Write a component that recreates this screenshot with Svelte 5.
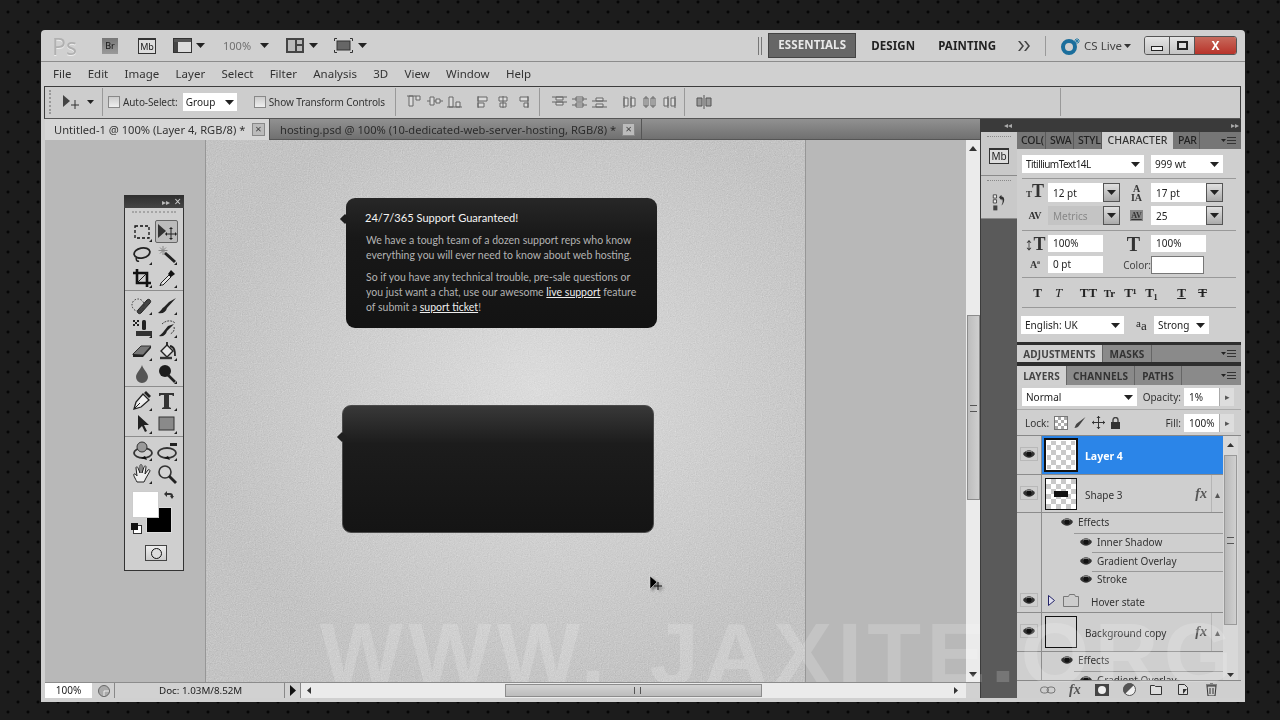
<script>
  const menus = ['File','Edit','Image','Layer','Select','Filter','Analysis','3D','View','Window','Help'];
  const tools = [
    ['<rect x="4" y="5" width="14" height="12" fill="none" stroke="#111" stroke-width="1.3" stroke-dasharray="3 2"/>', true],
    ['', false],
    ['<ellipse cx="11" cy="9" rx="8" ry="5" fill="none" stroke="#222" stroke-width="1.8" transform="rotate(-12 11 9)"/><path d="M6 13c-2 2 0 5 2 4" fill="none" stroke="#222" stroke-width="1.5"/>', true],
    ['<path d="M7 2v9M2.500 6.500h9M4 3.500l6 6M10 3.500l-6 6" stroke="#8a8a8a"/><path d="M9 9l10 9" stroke="#222" stroke-width="3"/>', true],
    ['<path d="M6 2v14h14M2 6h14v14" fill="none" stroke="#111" stroke-width="2.6"/><path d="M6 16L16 6" stroke="#222"/>', true],
    ['<path d="M5 18l-1 1 1-3 8-8 2 2-8 8z" fill="#e4e4e4" stroke="#222"/><path d="M12 7l3-4 4 4-4 3z" fill="#111"/>', true],
    ['<path d="M7 16l9-10c2-2 5 1 3 3L10 19c-2 2-5-1-3-3z" fill="#444" stroke="#222"/><circle cx="7" cy="11" r="6" fill="none" stroke="#333" stroke-dasharray="1.5 1.5"/>', true],
    ['<path d="M2 19c5 1 8-1 9-5l9-10-7 4-5 5c-2 1-3 4-6 6z" fill="#222"/>', true],
    ['<path d="M2 3h2v2H2zM6 3h2v2H6zM4 5h2v2H4zM2 7h2v2H2zM6 7h2v2H6z" fill="#222"/><rect x="11" y="3" width="4" height="10" rx="1.5" fill="#222"/><rect x="5" y="14" width="16" height="5" fill="#333"/>', true],
    ['<path d="M3 19c4 1 7-1 8-5l7-7-6 2-4 5c-1 2-3 3-5 5z" fill="#222"/><path d="M6 7c4-4 10-4 13-1M18 10c1 3-1 6-4 7" fill="none" stroke="#444" stroke-dasharray="2 1"/>', true],
    ['<path d="M2 14l8-8h10l-8 9H2z" fill="#777" stroke="#333"/><path d="M2 14v3h10l8-9V6l-8 9z" fill="#222"/>', true],
    ['<path d="M5 11l6-6 6 6-6 6z" fill="#e4e4e4" stroke="#222" stroke-width="1.4"/><path d="M11 5V2M14 6c5 1 5 6 5 10" fill="none" stroke="#222" stroke-width="1.8"/><path d="M4 18h12" stroke="#333" stroke-width="2.400"/>', true],
    ['<path d="M11 2c-1 4-6 8-6 12a6 6 0 0 0 12 0c0-4-5-8-6-12z" fill="#555"/>', false],
    ['<circle cx="9" cy="8" r="6" fill="#1c1c1c"/><path d="M12 12l7 7" stroke="#222" stroke-width="2.600"/>', true],
    ['<path d="M3 19l2-7 7-8 6 6-8 7z" fill="#eee" stroke="#222" stroke-width="1.3"/><path d="M3 19l6-6" stroke="#222"/><path d="M13 3l2-2 5 5-2 2z" fill="#222"/>', true],
    ['<path d="M3 6V3h15v3h-1l-1-1h-3v12l2 1v1H6v-1l2-1V5H5L4 6z" fill="#333"/>', true],
    ['<path d="M7 2v15l4-4 3 6 2-1-3-6h5z" fill="#222"/>', true],
    ['<rect x="3" y="4" width="15" height="13" fill="#8a8a8a" stroke="#333"/>', true],
    ['<ellipse cx="12" cy="13" rx="9" ry="5" fill="none" stroke="#333" stroke-width="1.8"/><circle cx="11" cy="7" r="5" fill="#999" stroke="#333"/><path d="M10 18l6 2-2-4z" fill="#111"/>', true],
    ['<ellipse cx="11" cy="13" rx="9" ry="5" fill="none" stroke="#333" stroke-width="1.8"/><rect x="14" y="3" width="7" height="3" fill="#222"/><path d="M8 18l6 2-2-4z" fill="#111"/>', true],
    ['<path d="M6 19C4 15 2 12 3 11s3 2 3 2L5 5c0-2 2-1 2 0l2 5V3c0-2 2-2 2 0v7l2-6c1-2 2-1 2 0l-1 7 3-4c1-1 2 0 2 1l-4 7-2 4z" fill="#eee" stroke="#222"/>', true],
    ['<circle cx="9" cy="9" r="6" fill="#d4d4d4" stroke="#333" stroke-width="1.600"/><path d="M13 13l7 7" stroke="#222" stroke-width="2.800"/>', false],
  ];
  const groups = [tools.slice(0,6), tools.slice(6,14), tools.slice(14,18), tools.slice(18,22)];
  const tabs2 = ['COL(','SWA','STYL'];
  const styleBtns = [['T','b'],['T','i'],['TT','b gl'],['Tr','small'],['T¹','b'],['T₁','b'],['T','u gl'],['T','s']];
</script>

{#snippet caret()}<svg class="caret" width="9" height="5" viewBox="0 0 9 5"><path d="M0 0h9L4.500 5z" fill="#222"/></svg>{/snippet}
{#snippet eye()}<svg width="14" height="10" viewBox="0 0 14 10"><path d="M1 5c3-5 9-5 12 0-3 5-9 5-12 0z" fill="#333"/><circle cx="7" cy="5" r="2.500" fill="#111"/><path d="M4 3c2-1 4-1 6 0" stroke="#999" fill="none"/></svg>{/snippet}
{#snippet menuIcon()}<svg class="mi" width="15" height="8" viewBox="0 0 15 8"><path d="M0 2h5L2.500 5z" fill="#222"/><path d="M6 .5h9M6 3.500h9M6 6.500h9" stroke="#333"/></svg>{/snippet}
{#snippet align(n)}<svg width="18" height="14" viewBox="0 0 18 14"><path d={n} fill="#dcdcdc" stroke="#666"/></svg>{/snippet}

<div class="desk">
  <div class="win">
    <header class="title">
      <span class="ps">Ps</span>
      <span class="br">Br</span>
      <span class="mb">Mb</span>
      <svg class="t-arr" width="20" height="15" viewBox="0 0 20 15"><rect x=".5" y=".5" width="18" height="14" fill="#ddd" stroke="#333"/><path d="M1 1h17v3H1z" fill="#555"/><rect x="1" y="4" width="4" height="10" fill="#444"/></svg>
      <span class="cwrap c-a">{@render caret()}</span>
      <span class="zoomv">100%</span>
      <span class="cwrap c-b">{@render caret()}</span>
      <svg class="t-view" width="18" height="15" viewBox="0 0 18 15"><rect width="18" height="15" fill="#444"/><path d="M2 2h7v11H2zM11 2h5v4h-5zM11 8h5v5h-5z" fill="#bbb"/></svg>
      <span class="cwrap c-c">{@render caret()}</span>
      <svg class="t-screen" width="19" height="15" viewBox="0 0 19 15"><path d="M.5 3V.5H3M16 .5h2.500V3M.5 12v2.500H3M16 14.500h2.500V12" fill="none" stroke="#333"/><rect x="3" y="3" width="13" height="9" fill="#666" stroke="#333"/></svg>
      <span class="cwrap c-c">{@render caret()}</span>
      <span class="grow"></span>
      <span class="dbl"></span>
      <span class="ws on">ESSENTIALS</span>
      <span class="ws d">DESIGN</span>
      <span class="ws p">PAINTING</span>
      <svg class="more" width="14" height="10" viewBox="0 0 14 10"><path d="M1 0l4 5-4 5h2l4-5-4-5zM7 0l4 5-4 5h2l4-5-4-5z" fill="#444"/></svg>
      <span class="vsep"></span>
      <svg class="cs" width="21" height="18" viewBox="0 0 21 18"><circle cx="9" cy="10" r="6" fill="none" stroke="#1b6e9c" stroke-width="4"/><path d="M17 1v6M14 4h6M15 2l4 4M19 2l-4 4" stroke="#2a7ea8"/></svg>
      <span class="cslive">CS Live</span>
      <svg class="cscaret" width="7" height="4" viewBox="0 0 7 4"><path d="M0 0h7L3.500 4z" fill="#333"/></svg>
      <div class="wbtns">
        <span class="wb"><i class="minb"></i></span>
        <span class="wb"><i class="maxb"></i></span>
        <span class="wb close">X</span>
      </div>
    </header>

    <nav class="menu">
      {#each menus as m}<span>{m}</span>{/each}
    </nav>

    <div class="opts">
      <span class="grip"></span>
      <svg class="movei" width="20" height="14" viewBox="0 0 20 14"><path d="M1 0v12l7-6z" fill="#444"/><path d="M13 5v9M9 10h8" stroke="#333"/></svg>
      <svg class="ocaret" width="7" height="4" viewBox="0 0 7 4"><path d="M0 0h7L3.500 4z" fill="#222"/></svg>
      <span class="osep o1"></span>
      <span class="chk"></span><span class="olabel">Auto-Select:</span>
      <span class="groupsel"><span>Group</span>{@render caret()}</span>
      <span class="chk c2"></span><span class="olabel">Show Transform Controls</span>
      <span class="osep o2"></span>
      <div class="aligns">
        {@render align('M1 1h9M3 1v10h4V1zM10 1h4v4h-4z')}
        {@render align('M1 6h3M4 2h4v8H4zM8 6h2M10 4h4v4h-4zM14 6h3')}
        {@render align('M1 12h15M3 2v10h4V2zM10 7v5h4V7z')}
        <span class="ag"></span>
        {@render align('M2 1v12M2 2h9v4H2zM2 8h6v4H2z')}
        {@render align('M7 1v12M3 2h8v4H3zM4 8h6v4H4z')}
        {@render align('M12 1v12M4 2h8v4H4zM8 8h4v4H8z')}
      </div>
      <span class="osep o3"></span>
      <div class="aligns a2">
        {@render align('M1 2h15M1 7h15M5 2v3h7V2zM5 7h7v3H5z')}
        {@render align('M1 4h15M1 10h15M5 2v4h7V2zM5 8h7v4H5z')}
        {@render align('M1 6h15M1 12h15M5 3h7v3H5zM5 9h7v3H5z')}
        <span class="ag"></span>
        {@render align('M3 1v12M10 1v12M3 3h4v8H3zM10 3h4v8h-4z')}
        {@render align('M5 1v12M12 1v12M3 3h4v8H3zM10 3h4v8h-4z')}
        {@render align('M7 1v12M14 1v12M3 3h4v8H3zM10 3h4v8h-4z')}
      </div>
      <span class="osep o4"></span>
      <svg class="autoal" width="18" height="14" viewBox="0 0 18 14"><path d="M9 0v14M2 3h5v8H2zM11 3h5v8h-5z" fill="#999" stroke="#555"/></svg>
      <span class="grow"></span>
      <span class="osep o5"></span>
    </div>

    <div class="work">
      <section class="docs">
        <div class="tabs">
          <div class="tab active"><span>Untitled-1 @ 100% (Layer 4, RGB/8) *</span><b class="x">×</b></div>
          <div class="tab second"><span>hosting.psd @ 100% (10-dedicated-web-server-hosting, RGB/8) *</span><b class="x">×</b></div>
        </div>
        <div class="canvas">
          <div class="paper">
            <svg class="noise" width="601" height="542"><filter id="grain" color-interpolation-filters="sRGB"><feTurbulence type="fractalNoise" baseFrequency="0.85" numOctaves="2"/><feColorMatrix type="matrix" values=".33 .33 .33 0 0 .33 .33 .33 0 0 .33 .33 .33 0 0 0 0 0 0 1"/></filter><rect width="601" height="542" filter="url(#grain)"/></svg>
            <div class="bubble b1">
              <i class="notch"></i>
              <h3>24/7/365 Support Guaranteed!</h3>
              <p>We have a tough team of a dozen support reps who know everything you will ever need to know about web hosting.</p>
              <p>So if you have any technical trouble, pre-sale questions or you just want a chat, use our awesome <u>live support</u> feature of submit a <u>suport ticket</u>!</p>
            </div>
            <div class="bubble b2"><i class="notch"></i></div>
          </div>
          <div class="vscroll">
            <svg class="sa" width="8" height="5" viewBox="0 0 8 5"><path d="M4 0l4 5H0z" fill="#333"/></svg>
            <div class="vthumb"><span class="gripv"></span></div>
            <svg class="sb" width="8" height="5" viewBox="0 0 8 5"><path d="M0 0h8L4 5z" fill="#333"/></svg>
          </div>
        </div>
        <div class="status">
          <span class="zbox">100%</span>
          <svg class="sicon" width="12" height="12" viewBox="0 0 12 12"><circle cx="6" cy="6" r="5.500" fill="#aaa" stroke="#666"/><path d="M6 6h5M6 6v5" stroke="#eee"/></svg>
          <span class="doc">Doc: 1.03M/8.52M</span>
          <svg class="play" width="6" height="11" viewBox="0 0 6 11"><path d="M0 0l6 5.500L0 11z" fill="#111"/></svg>
          <div class="hscroll">
            <svg class="hl" width="4" height="7" viewBox="0 0 4 7"><path d="M4 0v7L0 3.500z" fill="#333"/></svg>
            <div class="hthumb"><span class="griph"></span></div>
            <svg class="hr" width="4" height="7" viewBox="0 0 4 7"><path d="M0 0v7l4-3.500z" fill="#333"/></svg>
          </div>
          <span class="corner"></span>
        </div>
      </section>

      <aside class="dock">
        <div class="dockhead"><span class="hl2">◂◂</span><span class="hr2">▸▸</span></div>
        <div class="dockbody">
          <div class="iconcol">
            <div class="ic c1"><span class="dots"></span><span class="mbbig">Mb</span></div>
            <div class="ic c2b"><span class="dots"></span>
              <svg width="16" height="18" viewBox="0 0 16 22"><path d="M1 1h4v4H1zM1 7h4v4H1z" fill="#eee" stroke="#333"/><rect x="1" y="14" width="5" height="6" fill="#444"/><path d="M8 4l3-3v2c5 0 4 8 0 11 2-4 2-8 0-8v2z" fill="#333"/></svg>
            </div>
          </div>
          <div class="panels">
            <div class="ptabs">
              {#each tabs2 as t}<span class="pt cut">{t}</span>{/each}
              <span class="pt act">CHARACTER</span><span class="pt par">PAR</span>
              <span class="grow"></span>{@render menuIcon()}
            </div>
            <div class="char">
              <div class="row r1">
                <span class="sel w122"><span class="ttl">TitilliumText14L</span>{@render caret()}</span>
                <span class="sel w72"><span>999 wt</span>{@render caret()}</span>
              </div>
              <hr class="h1"/>
              <div class="row r2">
                <span class="glyph tt"><small>T</small>T</span>
                <span class="combo"><span>12 pt</span><b>{@render caret()}</b></span>
                <span class="glyph lead">A<br/>IA</span>
                <span class="combo"><span>17 pt</span><b>{@render caret()}</b></span>
              </div>
              <div class="row r3">
                <span class="glyph av">AV</span>
                <span class="combo dis"><span>Metrics</span><b>{@render caret()}</b></span>
                <span class="glyph av dark">AV</span>
                <span class="combo"><span>25</span><b>{@render caret()}</b></span>
              </div>
              <hr class="h2"/>
              <div class="row r4">
                <span class="glyph big">↕T</span>
                <span class="inp">100%</span>
                <span class="glyph big wide">T</span>
                <span class="inp">100%</span>
              </div>
              <div class="row r5">
                <span class="glyph base">Aª</span>
                <span class="inp">0 pt</span>
                <span class="collab">Color:</span>
                <span class="swatch"></span>
              </div>
              <hr class="h3"/>
              <div class="row r6">
                {#each styleBtns as [t,c]}<span class={'sb2 '+c}>{t}</span>{/each}
              </div>
              <hr class="h4"/>
              <div class="row r7">
                <span class="sel w103"><span>English: UK</span>{@render caret()}</span>
                <span class="aa"><sup>a</sup>a</span>
                <span class="sel w55"><span>Strong</span>{@render caret()}</span>
              </div>
            </div>
            <div class="adj">
              <span class="pt2 act2 t86">ADJUSTMENTS</span><span class="pt2 t49">MASKS</span><span class="grow"></span>{@render menuIcon()}
            </div>
            <div class="ltabs">
              <span class="pt2 act2 t50">LAYERS</span><span class="pt2 t68">CHANNELS</span><span class="pt2 t47">PATHS</span><span class="grow"></span>{@render menuIcon()}
            </div>
            <div class="blend">
              <span class="sel w115"><span>Normal</span>{@render caret()}</span>
              <span class="grow"></span>
              <span class="lbl">Opacity:</span>
              <span class="inp sm">1%</span><span class="step">▸</span>
            </div>
            <div class="lock">
              <span class="lbl">Lock:</span>
              <span class="ck"></span>
              <svg width="14" height="13" viewBox="0 0 13 13"><path d="M1 12c2 0 4-1 5-3l6-8-8 6c-2 1-2 3-3 5z" fill="#444"/></svg>
              <svg width="13" height="13" viewBox="0 0 13 13"><path d="M6.500 0v13M0 6.500h13" stroke="#333"/><path d="M6.500 0l2 2h-4zM6.500 13l2-2h-4zM0 6.500l2 2v-4zM13 6.500l-2 2v-4z" fill="#333"/></svg>
              <svg width="11" height="12" viewBox="0 0 11 12"><path d="M3 5V3a2.500 2.500 0 0 1 5 0v2" fill="none" stroke="#444" stroke-width="1.400"/><rect x="1" y="5" width="9" height="7" fill="#333"/></svg>
              <span class="grow"></span>
              <span class="lbl">Fill:</span>
              <span class="inp sm">100%</span><span class="step">▸</span>
            </div>
            <div class="layers">
              <div class="llist">
                <div class="lrow h39"><span class="eye">{@render eye()}</span><div class="lmain sel2"><span class="thumb chk2 selthumb"></span><b>Layer 4</b></div></div>
                <div class="lrow h38"><span class="eye">{@render eye()}</span><div class="lmain"><span class="thumb chk2"><i class="blk"></i></span><span class="nm">Shape 3</span><em>fx</em><span class="up">▴</span></div></div>
                <div class="lrow sub e21"><span class="eye empty"></span><div class="lmain eff">{@render eye()}<span>Effects</span></div></div>
                <div class="lrow sub"><span class="eye empty"></span><div class="lmain eff2">{@render eye()}<span>Inner Shadow</span></div></div>
                <div class="lrow sub"><span class="eye empty"></span><div class="lmain eff2">{@render eye()}<span>Gradient Overlay</span></div></div>
                <div class="lrow sub e17"><span class="eye empty"></span><div class="lmain eff2 last">{@render eye()}<span>Stroke</span></div></div>
                <div class="lrow h25"><span class="eye e-h">{@render eye()}</span><div class="lmain grp"><svg width="7" height="11" viewBox="0 0 7 11"><path d="M.5.500l6 5-6 5z" fill="#e0e0ee" stroke="#226"/></svg><svg width="16" height="13" viewBox="0 0 16 13"><path d="M.5 2.500h5l1-2h5l1 2h3v10H.5z" fill="#ccc" stroke="#777"/></svg><span>Hover state</span></div></div>
                <div class="lrow h39"><span class="eye">{@render eye()}</span><div class="lmain"><span class="thumb plain"></span><span class="nm">Background copy</span><em>fx</em><span class="up">▴</span></div></div>
                <div class="lrow sub e20"><span class="eye empty"></span><div class="lmain eff">{@render eye()}<span>Effects</span></div></div>
                <div class="lrow sub"><span class="eye empty"></span><div class="lmain eff2">{@render eye()}<span>Gradient Overlay</span></div></div>
              </div>
              <div class="lscroll">
                <svg class="la" width="7" height="4" viewBox="0 0 7 4"><path d="M3.500 0L7 4H0z" fill="#333"/></svg>
                <div class="lthumb"><span class="gripv"></span></div>
                <svg class="lb" width="7" height="4" viewBox="0 0 7 4"><path d="M0 0h7L3.500 4z" fill="#333"/></svg>
              </div>
            </div>
            <div class="lfoot">
              <svg class="f1" width="16" height="8" viewBox="0 0 16 8"><rect x=".5" y="1" width="8" height="6" rx="3" fill="none" stroke="#777"/><rect x="7" y="1" width="8" height="6" rx="3" fill="none" stroke="#777"/></svg>
              <em class="f2">fx</em>
              <svg class="f3" width="14" height="12" viewBox="0 0 14 12"><rect width="14" height="12" fill="#444"/><circle cx="7" cy="6" r="4" fill="#eee"/></svg>
              <svg class="f4" width="13" height="13" viewBox="0 0 13 13"><circle cx="6.500" cy="6.500" r="6" fill="#eee" stroke="#555"/><path d="M11 2L2 11A6 6 0 0 1 11 2z" fill="#555"/></svg>
              <svg class="f5" width="12" height="10" viewBox="0 0 12 10"><path d="M.5 9.500v-9h4l1 1h6v8z" fill="#ddd" stroke="#333"/></svg>
              <svg class="f6" width="10" height="11" viewBox="0 0 10 11"><path d="M.5.500h6l3 3v7H.5z" fill="#ddd" stroke="#333"/><path d="M5 10V5h4" fill="#333"/></svg>
              <svg class="f7" width="11" height="13" viewBox="0 0 11 13"><path d="M1 3h9l-1 10H2zM0 2h11M4 0h3" fill="#ccc" stroke="#333"/><path d="M4 5v6M7 5v6" stroke="#333"/></svg>
            </div>
          </div>
        </div>
      </aside>
    </div>
  </div>

  <div class="toolbox">
    <div class="tbhead"><span>▸▸</span><b>×</b></div>
    <div class="tbgrip"></div>
    {#each groups as g, gi}
      <div class="tgrid" class:lined={gi > 0}>
        {#each g as [path, tri], i}
          <span class="tool" class:sel3={gi === 0 && i === 1}>
            {#if gi === 0 && i === 1}
              <svg width="22" height="22" viewBox="0 0 22 22"><path d="M2 3v14l8-7z" fill="#333"/><path d="M15 7v11M10 13h10" stroke="#222"/><path d="M15 6l2 2h-4zM15 19l2-2h-4zM9 13l2 2v-4zM21 13l-2 2v-4z" fill="#222"/></svg>
            {:else}
              <svg width="22" height="22" viewBox="0 0 22 22">{@html path}</svg>
            {/if}
            {#if tri}<i class="tri"></i>{/if}
          </span>
        {/each}
      </div>
    {/each}
    <div class="colors">
      <span class="bgc"></span><span class="fgc"></span>
      <span class="defc"></span>
      <svg class="swap" width="11" height="11" viewBox="0 0 11 11"><path d="M1 3l3-3v2h3c2 0 3 1 3 3h1l-2 3-2-3h1c0-1-1-1-2-1H4v2z" fill="#333"/></svg>
    </div>
    <div class="qm"><i></i></div>
  </div>

  <div class="wm"><span>WWW. JAXITE.ORG</span></div>

  <svg class="cursor" width="16" height="18" viewBox="0 0 16 18"><path d="M1 1v13l7-7z" fill="#000" stroke="#eee" stroke-width=".5"/><path d="M9 7v8M5 11h8" stroke="#111"/></svg>
</div>

<style>
  :global(body){margin:0;background:#1b1b1b;}
  .desk{position:relative;width:1280px;height:720px;box-sizing:border-box;padding:30px 35px 18px 41px;overflow:hidden;
    background-color:#1c1c1c;
    background-image:radial-gradient(circle at 50% 50%,#060606 1.2px,transparent 1.8px),radial-gradient(circle at 50% 50%,#060606 1.2px,transparent 1.8px);
    background-size:20px 20px;background-position:8px 12px,18px 2px;
    font-family:"Noto Sans","Open Sans",sans-serif;color:#222;font-size:10px;}
  .win{width:100%;height:100%;background:#d0d0d0;border-radius:4px 4px 0 0;display:flex;flex-direction:column;box-sizing:border-box;padding:0 4px 4px 3px;overflow:hidden;}
  .grow{flex:1;}
  svg{display:block;flex:none;}

  .title{height:32px;display:flex;align-items:center;border-bottom:1px solid #8c8c8c;flex:none;margin:0 -4px 0 -3px;padding:0 8px 0 11px;box-sizing:border-box;position:relative;}
  .ps{font:23px "Noto Sans",sans-serif;color:#b0b0b0;width:24px;text-shadow:0 1px 0 #eee;line-height:30px;}
  .br{width:16px;height:16px;margin-left:26px;background:linear-gradient(#777,#9a9a9a);font-size:9px;line-height:16px;text-align:center;color:#111;}
  .mb{margin-left:20px;width:16px;height:13px;border:1px solid #333;background:#ddd;font-size:9px;line-height:13px;text-align:center;border-top-width:2px;}
  .t-arr{margin-left:17px;}
  .cwrap{display:block;}
  .caret{display:block;}
  .c-a{margin-left:3px;}
  .zoomv{margin-left:18px;color:#707070;font-size:11px;width:28px;}
  .c-b{margin-left:9px;}
  .t-view{margin-left:17px;}
  .c-c{margin-left:5px;}
  .t-screen{margin-left:16px;}
  .dbl{width:2px;height:18px;border-left:1px solid #777;border-right:1px solid #777;margin-right:6px;}
  .ws{font:700 11.500px "Noto Sans",sans-serif;color:#222;letter-spacing:.1px;}
  .ws.on{background:#666;border:1px solid #444;color:#e8e8e8;height:23px;line-height:22px;width:86px;text-align:center;}
  .d{margin-left:15px;}
  .p{margin-left:23px;}
  .more{margin-left:21px;}
  .vsep{width:1px;height:20px;background:#999;margin:0 14px 0 14px;}
  .cslive{margin-left:3px;color:#444;font-size:11.500px;white-space:nowrap;}
  .cscaret{margin-left:2px;}
  .wbtns{display:flex;height:17px;margin-left:13px;border:1px solid #555;border-radius:3px;overflow:hidden;box-sizing:content-box;}
  .wb{width:25px;height:17px;background:linear-gradient(#e4e4e4,#c4c4c4);border-right:1px solid #555;display:flex;align-items:center;justify-content:center;box-sizing:border-box;}
  .wb.close{width:41px;background:linear-gradient(#c76a5c,#b8332a);color:#fff;border:0;font-weight:700;font-size:12px;}
  .minb{display:block;width:10px;height:3px;border:1px solid #222;background:#eee;margin-top:5px;}
  .maxb{display:block;width:7px;height:5px;border:2px solid #222;background:#ddd;}

  .menu{height:24px;display:flex;align-items:center;gap:16.300px;padding-left:9px;padding-bottom:1px;flex:none;font-size:11.500px;color:#333;box-sizing:border-box;}

  .opts{height:33px;flex:none;border:1px solid #3c3c3c;border-bottom:1px solid #555;background:#cdcdcd;display:flex;align-items:center;box-sizing:border-box;padding-bottom:1px;}
  .grip{width:2px;height:24px;border-left:2px dotted #999;margin-left:4px;}
  .movei{margin-left:9px;}
  .ocaret{margin-left:5px;}
  .osep{width:1px;height:28px;background:#999;flex:none;}
  .o1{margin-left:8px;}
  .chk{width:10px;height:10px;border:1px solid #888;background:linear-gradient(#ccc,#eee);margin-left:5px;flex:none;}
  .olabel{margin-left:3px;font-size:10px;letter-spacing:-.1px;color:#333;white-space:nowrap;}
  .c2{margin-left:17px;}
  .groupsel{margin-left:5px;width:54px;height:18px;background:#fff;display:flex;align-items:center;justify-content:space-between;padding:0 3px 0 3px;box-sizing:border-box;font-size:10px;}
  .o2{margin-left:10px;}
  .aligns{display:flex;gap:2px;margin-left:10px;}
  .ag{width:8px;}
  .o3{margin-left:5px;}
  .a2{margin-left:11px;}
  .o4{margin-left:5px;}
  .autoal{margin-left:10px;}
  .o5{margin-right:179px;}

  .work{flex:1;display:flex;min-height:0;}
  .docs{width:935px;flex:none;margin-left:1px;display:flex;flex-direction:column;min-width:0;}
  .tabs{height:21px;background:linear-gradient(#919191,#707070);display:flex;flex:none;border-bottom:1px solid #555;box-sizing:border-box;}
  .tab{display:flex;align-items:center;padding:0 6px 0 10px;gap:6px;color:#2c2c2c;font-size:11.150px;border-right:1px solid #555;white-space:nowrap;}
  .tab.active{background:#d6d6d6;color:#333;width:225px;box-sizing:border-box;justify-content:space-between;padding:0 4px 0 9px;margin-bottom:-1px;}
  .x{width:11px;height:11px;border:1px solid #888;background:#bbb;line-height:10px;text-align:center;font-size:11px;font-weight:400;color:#444;flex:none;}
  .canvas{flex:1;background:#b8b8b8;display:flex;min-height:0;position:relative;}
  .paper{position:relative;margin-left:160px;width:601px;flex:none;box-sizing:border-box;border:1px solid #969696;border-width:0 1px;overflow:hidden;
    background:radial-gradient(ellipse 340px 300px at 330px 250px,#dcdcdc,#cbcbcb 70%,#c4c4c4);}
  .noise{position:absolute;left:0;top:0;opacity:.5;mix-blend-mode:overlay;}
  .bubble{position:absolute;border-radius:9px;background:linear-gradient(#272727,#181818 30%,#131313);color:#b3b3b3;box-sizing:border-box;font-family:"Lato","Open Sans",sans-serif;}
  .b1{left:140px;top:58px;width:311px;height:130px;padding:11px 19px 0 19px;font-size:10.500px;line-height:15px;}
  .b2{left:136px;top:265px;width:312px;height:128px;border:1px solid #4a4a4a;background:linear-gradient(#383838,#1c1c1c 30%,#141414);}
  .notch{position:absolute;left:-6px;width:10px;height:10px;background:#1e1e1e;transform:rotate(45deg) scale(.72);top:16px;}
  .b2 .notch{top:26px;background:#202020;}
  h3{margin:0 0 6px;color:#f4f4f4;font:400 11.100px/18px "Lato",sans-serif;}
  p{margin:0 0 7px 1px;}
  u{color:#eee;}
  .vscroll{position:absolute;right:0;top:0;bottom:0;width:14px;background:#ebebeb;}
  .sa{position:absolute;left:3px;top:6px;}
  .sb{position:absolute;left:3px;bottom:5px;}
  .vthumb{position:absolute;left:1px;top:175px;height:185px;width:13px;background:linear-gradient(90deg,#bdbdbd,#cfcfcf);border:1px solid #8c8c8c;box-sizing:border-box;}
  .gripv{position:absolute;left:2px;right:2px;top:50%;height:5px;margin-top:-3px;border-top:1px solid #555;border-bottom:1px solid #555;}
  .status{height:16px;flex:none;display:flex;align-items:center;background:#d1d1d1;border-top:1px solid #8c8c8c;box-sizing:border-box;}
  .zbox{width:47px;height:15px;background:#fff;text-align:center;line-height:15px;font-size:10px;flex:none;}
  .sicon{margin-left:6px;margin-right:4px;}
  .doc{width:171px;padding-left:44px;box-sizing:border-box;font-size:9.800px;border-left:1px solid #888;border-right:1px solid #888;line-height:15px;flex:none;white-space:nowrap;}
  .play{margin-left:5px;}
  .hscroll{position:relative;margin-left:4px;flex:1;height:15px;background:#ebebeb;border-left:1px solid #888;}
  .hl{position:absolute;left:6px;top:4px;}
  .hr{position:absolute;right:8px;top:4px;}
  .hthumb{position:absolute;left:204px;top:1px;width:257px;height:13px;background:linear-gradient(#d2d2d2,#bcbcbc);border:1px solid #8c8c8c;box-sizing:border-box;}
  .griph{position:absolute;left:50%;top:2px;bottom:2px;width:5px;border-left:1px solid #555;border-right:1px solid #555;}
  .corner{width:14px;height:15px;background:#d1d1d1;flex:none;}

  .dock{flex:1;display:flex;flex-direction:column;min-width:0;background:#3c3c3c;}
  .dockhead{height:13px;background:#3a3a3a;position:relative;flex:none;color:#aaa;font-size:8px;line-height:12px;}
  .hl2{position:absolute;left:24px;}
  .hr2{position:absolute;right:2px;}
  .dockbody{flex:1;display:flex;min-height:0;}
  .iconcol{width:36px;margin-left:1px;flex:none;background:#5a5a5a;box-sizing:border-box;}
  .ic{background:#c9c9c9;border-bottom:1px solid #8a8a8a;display:flex;flex-direction:column;align-items:center;box-sizing:border-box;}
  .c1{height:44px;}
  .c2b{height:43px;}
  .dots{width:24px;height:1px;border-top:1px dotted #888;margin:4px 0 10px;}
  .c2b svg{margin-top:2px;}
  .mbbig{width:18px;height:13px;border:1px solid #333;background:#ddd;font-size:10px;line-height:13px;text-align:center;border-top-width:2px;}
  .panels{flex:1;display:flex;flex-direction:column;min-width:0;background:#cfcfcf;}
  .ptabs{height:17px;display:flex;align-items:center;background:#767676;flex:none;font-size:10.500px;font-weight:500;padding-right:5px;}
  .pt{height:17px;line-height:17px;color:#222;text-align:left;border-right:1px solid #5a5a5a;box-sizing:border-box;white-space:nowrap;width:28px;padding-left:4px;flex:none;letter-spacing:-.2px;}
  .pt:first-child{width:29px;padding-left:4px;}
  .act{width:71px;background:#d0d0d0;color:#333;border:0;text-align:center;padding:0;letter-spacing:0;}
  .par{width:27px;padding-left:5px;}
  .char{height:193px;flex:none;padding:6px 5px 0 5px;box-sizing:border-box;}
  .row{display:flex;align-items:center;}
  .sel{display:flex;align-items:center;justify-content:space-between;background:#fff;height:18px;padding:0 4px 0 4px;box-sizing:border-box;font-size:10px;flex:none;}
  .ttl{letter-spacing:-.55px;}
  .w122{width:122px;}.w72{width:72px;margin-left:7px;}
  .w103{width:103px;margin-left:-1px;}.w55{width:55px;}.w115{width:115px;}
  hr{border:0;border-top:1px solid #999;margin:0;}
  .h1{margin:5px 0 4px;}
  .r2,.r3{height:19px;}
  .r3{margin-top:4px;}
  .glyph{width:26px;flex:none;font:700 14px "Liberation Serif",serif;text-align:center;color:#333;line-height:10px;}
  .tt small{font-size:9px;}
  .tt{font-size:18px;}
  .lead{font-size:10px;margin-left:10px;margin-right:8px;width:13px;line-height:9px;}
  .r3 .av{font-size:10px;}
  .r3 .dark{margin-left:10px;margin-right:8px;width:13px;background:#888;font-size:8px;height:11px;line-height:11px;text-decoration:underline;}
  .combo{display:flex;width:72px;height:19px;background:#fff;box-sizing:border-box;align-items:center;padding-left:5px;justify-content:space-between;font-size:10px;flex:none;}
  .combo b{width:17px;height:19px;background:linear-gradient(#e0e0e0,#aaa);border:1px solid #555;box-sizing:border-box;display:flex;align-items:center;justify-content:center;}
  .dis{background:#c4c4c4;color:#888;}
  .h2{margin:5px 0 4px;}
  .r4{height:17px;}
  .r5{height:17px;margin-top:4px;}
  .inp{width:55px;height:100%;background:#fff;line-height:17px;padding-left:5px;box-sizing:border-box;font-size:10px;flex:none;}
  .big{font-size:18px;}
  .wide{margin-left:13px;width:35px;font-size:20px;}
  .base{font-size:10px;}
  .collab{width:48px;text-align:right;font-size:10px;color:#444;}
  .swatch{width:53px;height:18px;background:#fff;border:1px solid #777;box-sizing:border-box;}
  .h3{margin:4px 0 0;}
  .r6{height:29px;padding-left:5px;}
  .sb2{font:700 13px "Liberation Serif",serif;color:#222;width:21px;text-align:center;}
  .sb2.i{font-style:italic;font-weight:400;}
  .sb2.gl{margin-left:9px;}
  .sb2.u{text-decoration:underline;}
  .sb2.s{text-decoration:line-through;}
  .sb2.small{font-size:11px;}
  .h4{margin:0 0 8px;}
  .aa{font:13px/13px "Liberation Serif",serif;margin:0 4px 0 12px;width:14px;white-space:nowrap;}
  .aa sup{font-size:11px;line-height:0;vertical-align:3px;}
  .adj,.ltabs{height:17px;flex:none;display:flex;align-items:center;background:#8a8a8a;box-sizing:content-box;padding-right:5px;}
  .adj{border-top:3px solid #2e2e2e;}
  .ltabs{border-top:4px solid #2e2e2e;height:19px;}
  .pt2{height:100%;display:flex;align-items:center;justify-content:center;font-weight:700;font-size:10px;color:#333;letter-spacing:.15px;border-right:1px solid #666;box-sizing:border-box;flex:none;}
  .t86{width:86px;}.t49{width:49px;}.t50{width:50px;}.t68{width:68px;}.t47{width:47px;}
  .act2{background:#d0d0d0;color:#444;}
  .blend{height:25px;flex:none;display:flex;align-items:center;padding:0 7px 0 5px;border-bottom:1px solid #aaa;box-sizing:border-box;}
  .lbl{font-size:10px;color:#333;}
  .inp.sm{height:18px;width:35px;margin-left:3px;line-height:18px;}
  .step{width:15px;height:18px;background:#ddd;font-size:9px;line-height:18px;text-align:center;color:#555;border-left:1px solid #aaa;box-sizing:border-box;flex:none;}
  .lock{height:26px;flex:none;display:flex;align-items:center;padding:0 7px 0 8px;gap:5px;border-bottom:1px solid #888;box-sizing:border-box;}
  .lock .step{margin-left:-5px;}
  .lock .inp.sm{margin-left:-2px;}
  .ck{width:12px;height:12px;border:1px solid #777;background:repeating-conic-gradient(#aaa 0 25%,#fff 0 50%) 0 0/6px 6px;}
  .layers{flex:1;display:flex;min-height:0;overflow:hidden;position:relative;}
  .llist{flex:1;min-width:0;overflow:hidden;}
  .lrow{display:flex;border-bottom:1px solid #8c8c8c;box-sizing:border-box;}
  .h39{height:39px;}.h38{height:38px;}.h25{height:24px;}.sub{height:19px;border-bottom:0;}
  .e21{height:21px;}.e17{height:17px;}.e20{height:20px;}
  .eye{width:25px;flex:none;display:flex;justify-content:center;align-items:flex-start;padding-top:13px;box-sizing:border-box;border-right:1px solid #8c8c8c;}
  .eye svg{outline:1px solid #b8b8b8;outline-offset:1px;}
  .eye.e-h{padding-top:6px;}
  .eye.empty{padding:0;}
  .lmain{flex:1;display:flex;align-items:center;min-width:0;background:#cfcfcf;position:relative;padding-left:3px;font-size:10px;color:#333;white-space:nowrap;overflow:hidden;}
  .sel2{background:#2b85e8;color:#fff;padding-left:2px;}
  .sel2 b{margin:2px 0 0 7px;font-size:10.500px;}
  .thumb{width:32px;height:32px;border:1px solid #111;box-sizing:border-box;position:relative;flex:none;}
  .chk2{background:repeating-conic-gradient(#c9c9c9 0 25%,#fff 0 50%) 0 0/10px 10px;}
  .selthumb{width:34px;height:34px;border:2px solid #111;outline:1px solid #fff;outline-offset:-3px;}
  .blk{position:absolute;left:8px;top:12px;width:14px;height:6px;background:#111;}
  .plain{background:#d4d4d4;}
  .nm{margin:2px 0 0 8px;flex:1;}
  em{font:italic 700 14px "Liberation Serif",serif;color:#555;margin-right:4px;}
  .up{width:11px;height:100%;text-align:center;line-height:38px;color:#555;border-left:1px solid #b5b5b5;}
  .eff{padding:0 0 4px 18px;gap:4px;box-sizing:border-box;}
  .eff2{padding:0 0 4px 37px;gap:4px;box-sizing:border-box;}
  .eff::after,.eff2::after{content:"";position:absolute;right:0;bottom:0;border-bottom:1px solid #999;}
  .eff::after{left:32px;}
  .eff2::after{left:50px;}
  .last::after{display:none;}
  .grp{padding-left:6px;gap:8px;}
  .grp span{margin:2px 0 0 4px;}
  .lscroll{width:15px;margin-right:3px;flex:none;background:#d8d8d8;position:relative;}
  .la{position:absolute;left:4px;top:7px;}
  .lb{position:absolute;left:4px;bottom:3px;}
  .lthumb{position:absolute;left:1px;top:19px;width:13px;height:170px;background:linear-gradient(90deg,#b8b8b8,#d0d0d0);border:1px solid #999;box-sizing:border-box;}
  .lfoot{height:18px;flex:none;display:flex;align-items:center;padding-left:23px;border-top:1px solid #888;background:#cfcfcf;box-sizing:border-box;}
  .lfoot em{margin:0;}
  .f2{margin-left:13px !important;width:16px;}
  .f3{margin-left:10px;}
  .f4{margin-left:14px;}
  .f5{margin-left:14px;}
  .f6{margin-left:16px;}
  .f7{margin-left:18px;}

  .toolbox{position:absolute;left:124px;top:195px;width:60px;height:376px;box-sizing:border-box;background:#cfcfcf;border:1px solid #333;border-top:0;}
  .tbhead{height:13px;background:linear-gradient(#2e2e2e,#444);color:#bbb;font-size:8px;line-height:13px;text-align:right;padding-right:3px;display:flex;justify-content:flex-end;gap:4px;margin:0 -1px;}
  .tbhead b{font-size:12px;font-weight:400;color:#ccc;}
  .tbgrip{height:1px;border-top:2px dotted #a5a5a5;margin:3px 7px 6px;}
  .tgrid{display:grid;grid-template-columns:23px 23px;grid-auto-rows:23px;column-gap:2px;padding-left:5px;}
  .lined{border-top:1px solid #8d8d8d;margin-top:1px;padding-top:2px;}
  .tool{position:relative;display:flex;align-items:center;justify-content:center;box-sizing:border-box;}
  .sel3{border:1px solid #666;border-radius:2px;background:#bcbcbc;}
  .tri{position:absolute;right:1px;bottom:1px;width:0;height:0;border-left:3px solid transparent;border-bottom:3px solid #222;}
  .colors{position:relative;height:50px;margin:5px 0 0 0;}
  .bgc{position:absolute;left:21px;top:17px;width:24px;height:24px;background:#000;border:1px solid #ddd;}
  .fgc{position:absolute;left:7px;top:1px;width:25px;height:25px;background:#fff;border:1px solid #ccc;}
  .defc{position:absolute;left:6px;top:33px;width:7px;height:7px;background:#111;box-shadow:3px 3px 0 #fff,3px 3px 0 1px #333;}
  .swap{position:absolute;left:38px;top:1px;}
  .qm{width:20px;height:14px;margin:5px 0 0 20px;background:linear-gradient(#eee,#ccc);border:1px solid #444;display:flex;align-items:center;justify-content:center;}
  .qm i{width:9px;height:9px;border-radius:50%;background:#ddd;border:1px solid #111;}

  .wm{position:absolute;left:320px;top:610px;width:921px;height:72px;overflow:hidden;pointer-events:none;}
  .wm span{font:700 88px/88px "Liberation Sans",sans-serif;color:#fff;opacity:.17;letter-spacing:5.500px;word-spacing:9px;white-space:pre;display:block;}
  .cursor{position:absolute;left:649px;top:575px;filter:drop-shadow(2px 2px 1px rgba(0,0,0,.4));}
</style>
